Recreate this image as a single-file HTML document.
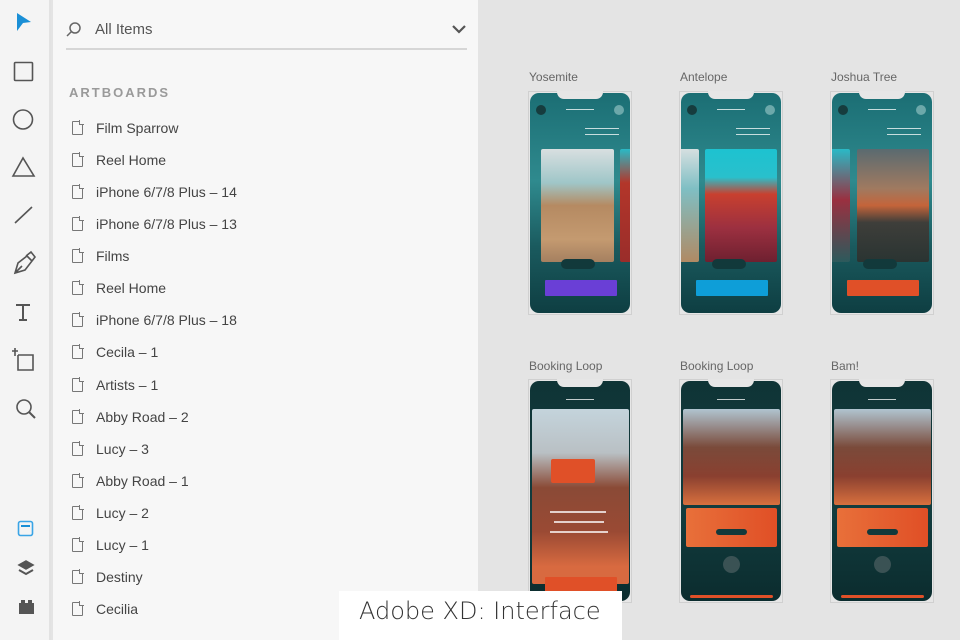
<!DOCTYPE html>
<html><head><meta charset="utf-8"><style>
*{margin:0;padding:0;box-sizing:border-box}
body{width:960px;height:640px;overflow:hidden;background:#e4e4e4;font-family:"Liberation Sans",sans-serif;position:relative}
.tb{position:absolute;left:0;top:0;width:51px;height:640px;background:#f4f4f4;border-right:2px solid #e2e2e2}
.pn{position:absolute;left:53px;top:0;width:425px;height:640px;background:#f7f7f7}
.ic{position:absolute}
.search{position:absolute;left:66px;top:48px;width:401px;border-bottom:2px solid #d6d6d6}
.all{position:absolute;left:95px;top:21px;font-size:15px;color:#555}
.hd{position:absolute;left:69px;top:85px;font-size:13px;letter-spacing:2px;color:#9a9a9a;font-weight:bold}
.it{position:absolute;left:72px;font-size:14px;color:#444;height:20px;line-height:20px}
.it i{position:absolute;left:0;top:3px;width:11px;height:14px;border:1.6px solid #777;border-radius:1px}
.it i:after{content:"";position:absolute;right:-2px;top:-2px;width:4px;height:4px;background:#f7f7f7;border-left:1.5px solid #777;border-bottom:1.5px solid #777}
.it span{position:absolute;left:24px;white-space:nowrap}
.lb{position:absolute;font-size:12px;color:#666}
.fr{position:absolute;width:104px;height:224px;border:1px solid #d0d0d0;background:#e6e6e6}
.ph{position:absolute;left:1px;top:1px;right:1px;bottom:1px;border-radius:9px;overflow:hidden;background:linear-gradient(#1b6e74,#2f8a8e 40%,#1a5a5e 70%,#0e3e42)}
.ph.d{background:linear-gradient(#0f3436,#123c3e 60%,#0b2c2e)}
.notch{position:absolute;left:28px;top:-1px;width:46px;height:8px;background:#e6e6e6;border-radius:0 0 7px 7px}
.card{position:absolute;border-radius:2px}
.btn{position:absolute;height:16px;border-radius:1px}
.t{position:absolute;height:2px;background:rgba(255,255,255,.75)}
.dot{position:absolute;width:10px;height:10px;border-radius:50%}
.cap{position:absolute;left:339px;top:591px;width:283px;height:49px;background:#fff;font-family:"DejaVu Sans","Liberation Sans",sans-serif;font-size:24px;color:#333;padding:6px 0 0 20px;font-weight:300}
</style></head><body>
<div class="tb"></div>
<svg class="ic" style="left:0;top:0" width="51" height="640" fill="none" stroke="#555" stroke-width="1.6">
<path d="M17 13 L31 22 L23 23 L17 31 Z" fill="#1a8fd6" stroke="none"/>
<rect x="14.5" y="62.5" width="18" height="18" rx="1"/>
<circle cx="23" cy="119.5" r="9.5"/>
<path d="M13 176 L23 158 L34 176 Z"/>
<path d="M15 223 L32 207"/>
<path d="M15 273 L18 263 L27 256 L32 261 L25 270 Z M15 273 L22 266 M26 256 L31 252 L35 257 L32 261"/>
<path d="M16 305 H30 M23 305 V320 M19 320 H27" stroke-width="2"/>
<path d="M12 351 H18 M15 348 V356 M18 355 H33 V370 H18 V355"/>
<circle cx="24" cy="407" r="7"/><path d="M29 412 L35 418" stroke-width="2"/>
<rect x="18.5" y="521.5" width="14" height="14" rx="2" stroke="#39a4e6" stroke-width="1.6"/><path d="M21 526 H30" stroke="#1a8fd6" stroke-width="2"/>
<path d="M19 565 L26 561 L33 565 L26 569 Z" fill="#555"/><path d="M19 570 L26 574 L33 570" stroke-width="2"/>
<rect x="19" y="603" width="15" height="11" fill="#555" stroke="none"/><rect x="21" y="600" width="4" height="4" fill="#555" stroke="none"/><rect x="28" y="600" width="4" height="4" fill="#555" stroke="none"/>
</svg>
<div class="pn"></div>
<svg class="ic" style="left:64px;top:20px" width="20" height="20" fill="none" stroke="#666" stroke-width="1.5"><circle cx="11" cy="8" r="5"/><path d="M7.5 11.5 L3 16"/></svg>
<div class="all">All Items</div>
<svg class="ic" style="left:450px;top:23px" width="18" height="14" fill="none" stroke="#555" stroke-width="2.2"><path d="M3 3 L9 9 L15 3"/></svg>
<div class="search"></div>
<div class="hd">ARTBOARDS</div>
<div class="it" style="top:118px"><i></i><span>Film Sparrow</span></div>
<div class="it" style="top:150px"><i></i><span>Reel Home</span></div>
<div class="it" style="top:182px"><i></i><span>iPhone 6/7/8 Plus – 14</span></div>
<div class="it" style="top:214px"><i></i><span>iPhone 6/7/8 Plus – 13</span></div>
<div class="it" style="top:246px"><i></i><span>Films</span></div>
<div class="it" style="top:278px"><i></i><span>Reel Home</span></div>
<div class="it" style="top:310px"><i></i><span>iPhone 6/7/8 Plus – 18</span></div>
<div class="it" style="top:342px"><i></i><span>Cecila – 1</span></div>
<div class="it" style="top:375px"><i></i><span>Artists – 1</span></div>
<div class="it" style="top:407px"><i></i><span>Abby Road – 2</span></div>
<div class="it" style="top:439px"><i></i><span>Lucy – 3</span></div>
<div class="it" style="top:471px"><i></i><span>Abby Road – 1</span></div>
<div class="it" style="top:503px"><i></i><span>Lucy – 2</span></div>
<div class="it" style="top:535px"><i></i><span>Lucy – 1</span></div>
<div class="it" style="top:567px"><i></i><span>Destiny</span></div>
<div class="it" style="top:599px"><i></i><span>Cecilia</span></div>

<div class="lb" style="left:529px;top:70px">Yosemite</div>
<div class="lb" style="left:680px;top:70px">Antelope</div>
<div class="lb" style="left:831px;top:70px">Joshua Tree</div>
<div class="lb" style="left:529px;top:359px">Booking Loop</div>
<div class="lb" style="left:680px;top:359px">Booking Loop</div>
<div class="lb" style="left:831px;top:359px">Bam!</div>

<!-- top row -->
<div class="fr" style="left:528px;top:91px"><div class="ph">
<div class="dot" style="left:6px;top:12px;background:#163c3e"></div><div class="t" style="left:36px;top:16px;width:28px;height:1px"></div><div class="dot" style="left:84px;top:12px;background:#6ca8aa"></div>
<div class="t" style="left:55px;top:35px;width:34px;height:1px"></div><div class="t" style="left:55px;top:41px;width:34px;height:1px"></div>
<div class="card" style="left:11px;top:56px;width:73px;height:113px;background:linear-gradient(#d8dfe0,#9fc6c8 30%,#b58a62 50%,#c49a70 80%,#a58060)"></div>
<div class="card" style="left:90px;top:56px;width:20px;height:113px;background:linear-gradient(#2ab9c6,#b3362a 30%,#9a2d2a)"></div>
<div class="card" style="left:31px;top:166px;width:34px;height:10px;background:#12393b;border-radius:5px"></div>
<div class="btn" style="left:15px;top:187px;width:72px;background:#6a3fd6"></div>
</div><div class="notch"></div></div>
<div class="fr" style="left:679px;top:91px"><div class="ph">
<div class="dot" style="left:6px;top:12px;background:#163c3e"></div><div class="t" style="left:36px;top:16px;width:28px;height:1px"></div><div class="dot" style="left:84px;top:12px;background:#6ca8aa"></div>
<div class="t" style="left:55px;top:35px;width:34px;height:1px"></div><div class="t" style="left:55px;top:41px;width:34px;height:1px"></div>
<div class="card" style="left:-2px;top:56px;width:20px;height:113px;background:linear-gradient(#d5dfe0,#7fbfc4 35%,#b08a64)"></div>
<div class="card" style="left:24px;top:56px;width:72px;height:113px;background:linear-gradient(#1dc2d0,#29c0cc 25%,#c8402f 40%,#9c3040 70%,#6e2030)"></div>
<div class="card" style="left:31px;top:166px;width:34px;height:10px;background:#12393b;border-radius:5px"></div>
<div class="btn" style="left:15px;top:187px;width:72px;background:#0e9ed8"></div>
</div><div class="notch"></div></div>
<div class="fr" style="left:830px;top:91px"><div class="ph">
<div class="dot" style="left:6px;top:12px;background:#163c3e"></div><div class="t" style="left:36px;top:16px;width:28px;height:1px"></div><div class="dot" style="left:84px;top:12px;background:#6ca8aa"></div>
<div class="t" style="left:55px;top:35px;width:34px;height:1px"></div><div class="t" style="left:55px;top:41px;width:34px;height:1px"></div>
<div class="card" style="left:-2px;top:56px;width:20px;height:113px;background:linear-gradient(#2ab9c6,#9a3040 45%,#2c5a5c)"></div>
<div class="card" style="left:25px;top:56px;width:72px;height:113px;background:linear-gradient(#5a6a70,#a07a60 35%,#c4643a 50%,#3e3e3a 65%,#2a3432)"></div>
<div class="card" style="left:31px;top:166px;width:34px;height:10px;background:#12393b;border-radius:5px"></div>
<div class="btn" style="left:15px;top:187px;width:72px;background:#e05028"></div>
</div><div class="notch"></div></div>

<!-- bottom row -->
<div class="fr" style="left:528px;top:379px"><div class="ph d">
<div class="t" style="left:36px;top:18px;width:28px;height:1px"></div>
<div class="card" style="left:2px;top:28px;width:97px;height:175px;background:linear-gradient(#c4d4dc,#b9c0c4 25%,#8a4a36 45%,#9a4a34 70%,#d86a40 90%)"></div>
<div class="card" style="left:21px;top:78px;width:44px;height:24px;background:#e05028"></div>
<div class="t" style="left:20px;top:130px;width:56px"></div><div class="t" style="left:24px;top:140px;width:50px"></div><div class="t" style="left:20px;top:150px;width:58px"></div>
<div class="btn" style="left:15px;top:196px;width:72px;background:#e05028"></div>
</div><div class="notch"></div></div>
<div class="fr" style="left:679px;top:379px"><div class="ph d">
<div class="t" style="left:36px;top:18px;width:28px;height:1px"></div>
<div class="card" style="left:2px;top:28px;width:97px;height:96px;background:linear-gradient(#b0c4d0,#7a4a3a 40%,#8a4030 70%,#d8703e)"></div>
<div class="card" style="left:5px;top:127px;width:91px;height:39px;background:linear-gradient(90deg,#e8703a,#e04f26)"></div>
<div class="card" style="left:35px;top:148px;width:31px;height:6px;border-radius:3px;background:#12393b"></div>
<div class="card" style="left:42px;top:175px;width:17px;height:17px;border-radius:50%;background:#3a5254"></div>
<div class="card" style="left:9px;top:214px;width:83px;height:3px;background:#e05028"></div>
</div><div class="notch"></div></div>
<div class="fr" style="left:830px;top:379px"><div class="ph d">
<div class="t" style="left:36px;top:18px;width:28px;height:1px"></div>
<div class="card" style="left:2px;top:28px;width:97px;height:96px;background:linear-gradient(#b0c4d0,#7a4a3a 40%,#8a4030 70%,#d8703e)"></div>
<div class="card" style="left:5px;top:127px;width:91px;height:39px;background:linear-gradient(90deg,#e8703a,#e04f26)"></div>
<div class="card" style="left:35px;top:148px;width:31px;height:6px;border-radius:3px;background:#12393b"></div>
<div class="card" style="left:42px;top:175px;width:17px;height:17px;border-radius:50%;background:#3a5254"></div>
<div class="card" style="left:9px;top:214px;width:83px;height:3px;background:#e05028"></div>
</div><div class="notch"></div></div>

<div class="cap">Adobe XD: Interface</div>
</body></html>
